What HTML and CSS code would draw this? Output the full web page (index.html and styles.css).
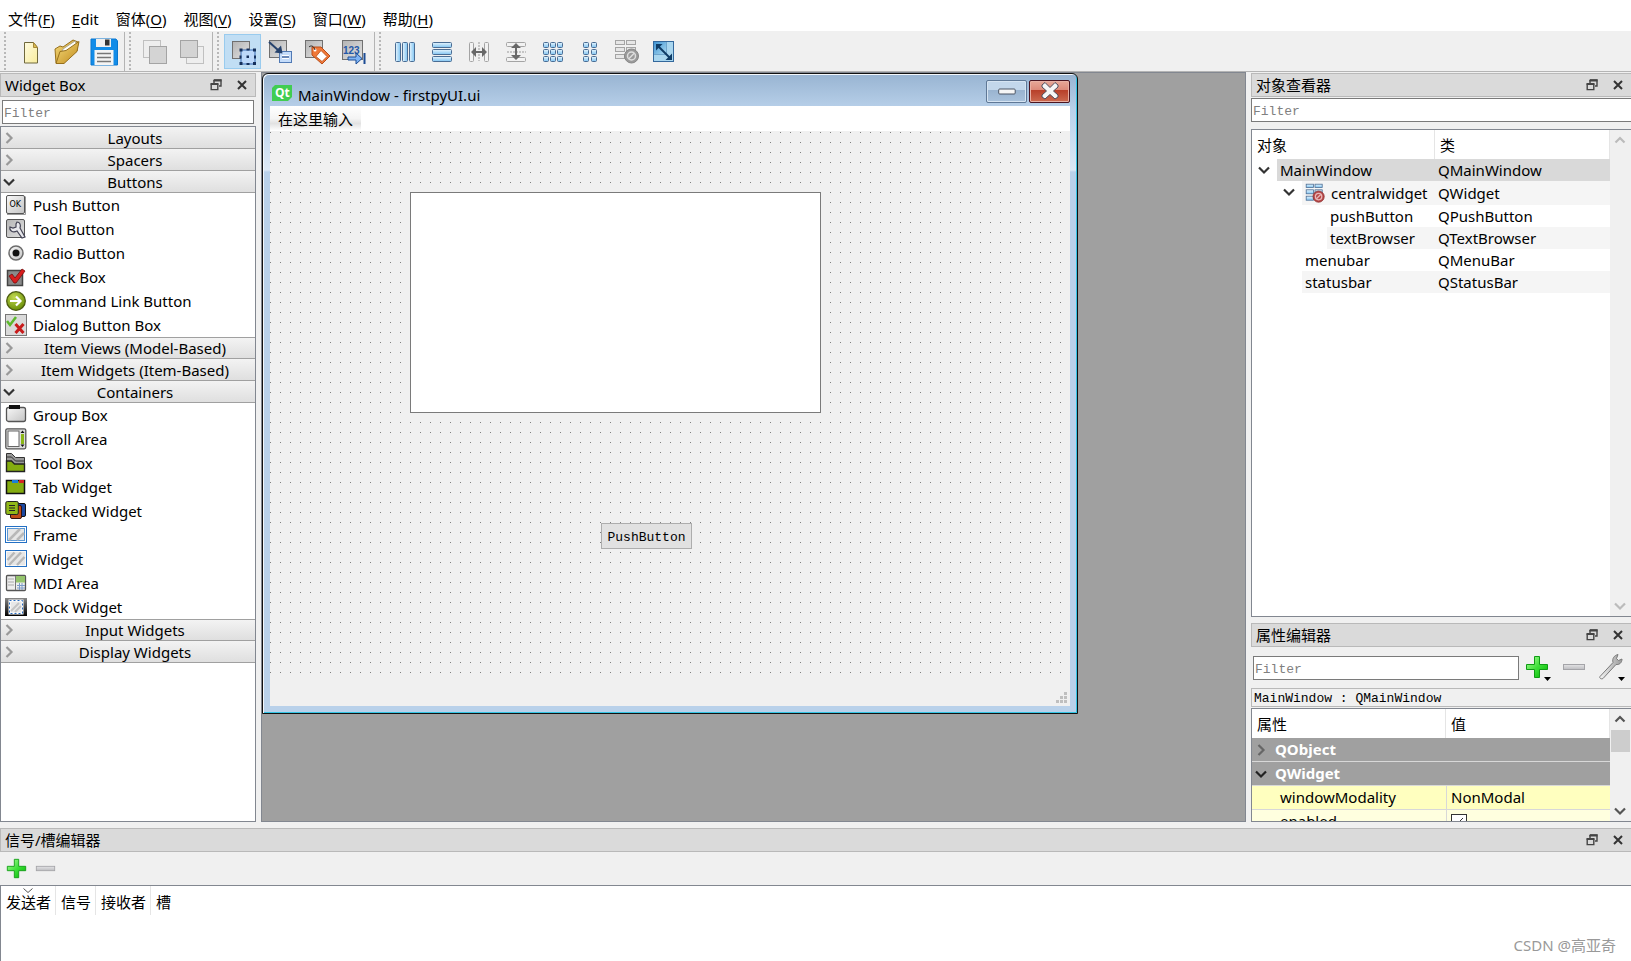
FILE: index.html
```html
<!DOCTYPE html>
<html lang="zh-CN">
<head>
<meta charset="utf-8">
<title>Qt Designer</title>
<link rel="stylesheet" href="styles.css">
</head>
<body>
<svg class="defs" aria-hidden="true">
  <defs>
    <linearGradient id="gGray" x1="0" y1="0" x2="1" y2="1"><stop offset="0" stop-color="#b4b4b4"/><stop offset="1" stop-color="#e2e2e2"/></linearGradient>
    <linearGradient id="gBlue" x1="0" y1="0" x2="0" y2="1"><stop offset="0" stop-color="#e8f5fd"/><stop offset="1" stop-color="#7fc4f2"/></linearGradient>
    <linearGradient id="gBlueH" x1="0" y1="0" x2="1" y2="0"><stop offset="0" stop-color="#e8f5fd"/><stop offset="1" stop-color="#7fc4f2"/></linearGradient>
    <linearGradient id="gPage" x1="0" y1="0" x2="1" y2="1"><stop offset="0" stop-color="#fffbe0"/><stop offset="1" stop-color="#f8ec9c"/></linearGradient>
    <linearGradient id="gGold" x1="0" y1="0" x2="1" y2="1"><stop offset="0" stop-color="#f6dc7c"/><stop offset="1" stop-color="#c08a1c"/></linearGradient>
    <linearGradient id="gPlus" x1="0" y1="0" x2="1" y2="1"><stop offset="0" stop-color="#b4ffa0"/><stop offset=".5" stop-color="#3fe03a"/><stop offset="1" stop-color="#00b400"/></linearGradient>
    <linearGradient id="gMinus" x1="0" y1="0" x2="0" y2="1"><stop offset="0" stop-color="#e4e4e6"/><stop offset="1" stop-color="#bcbcc0"/></linearGradient>
    <linearGradient id="gBox" x1="0" y1="0" x2="1" y2="1"><stop offset="0" stop-color="#f8f8f8"/><stop offset="1" stop-color="#c4c4c4"/></linearGradient>
    <radialGradient id="gGreen" cx=".4" cy=".3" r=".7"><stop offset="0" stop-color="#c0d850"/><stop offset="1" stop-color="#6c9008"/></radialGradient>
    <linearGradient id="gSize" x1="0" y1="0" x2="1" y2="1"><stop offset="0" stop-color="#3f93d2"/><stop offset="1" stop-color="#a8d8f0"/></linearGradient>
    <linearGradient id="gDark" x1="0" y1="0" x2="0" y2="1"><stop offset="0" stop-color="#888"/><stop offset="1" stop-color="#000"/></linearGradient>
    <linearGradient id="gMetal" x1="0" y1="0" x2="1" y2="0"><stop offset="0" stop-color="#f4f4f4"/><stop offset="1" stop-color="#9a9a9a"/></linearGradient>
  </defs>
  <symbol id="float" viewBox="0 0 12 12"><path d="M4 1h7v6h-2M4 1v3" fill="none" stroke="#444" stroke-width="1.4"/><path d="M3.500 1.500h8" stroke="#444" stroke-width="2"/><path d="M1.200 5.200h6.600v5.400h-6.600z" fill="none" stroke="#444" stroke-width="1.400"/><path d="M.6 5h7.800" stroke="#444" stroke-width="2"/></symbol>
  <symbol id="close" viewBox="0 0 12 12"><path d="M2 2l8 8M10 2l-8 8" stroke="#333" stroke-width="2" fill="none"/></symbol>
  <symbol id="right" viewBox="0 0 12 12"><path d="M3.500 1l5 5-5 5" stroke="currentColor" stroke-width="2.200" fill="none"/></symbol>
  <symbol id="down" viewBox="0 0 12 12"><path d="M1 3.500l5 5 5-5" stroke="currentColor" stroke-width="2.200" fill="none"/></symbol>
  <symbol id="up" viewBox="0 0 12 12"><path d="M1.500 8.500l4.500-4.500 4.500 4.500" stroke="currentColor" stroke-width="2.200" fill="none"/></symbol>
  <symbol id="plus" viewBox="0 0 24 24"><path d="M9.500 1.500h5v8h8v5h-8v8h-5v-8h-8v-5h8z" fill="url(#gPlus)" stroke="#0f9c14"/></symbol>
  <symbol id="minus" viewBox="0 0 24 24"><rect x="1.500" y="9.500" width="21" height="5" fill="url(#gMinus)" stroke="#a4a4a8"/></symbol>
  <symbol id="nolayout" viewBox="2 2 25 25"><g fill="url(#gBlue)" stroke="#4a6d94"><rect x="3.500" y="3.500" width="9" height="4"/><rect x="14.500" y="3.500" width="9" height="4"/><rect x="3.500" y="10.500" width="9" height="5"/><rect x="3.500" y="18.500" width="9" height="5"/><rect x="14.500" y="10.500" width="9" height="5"/></g><circle cx="19" cy="19" r="7" fill="#b84848" stroke="#8c2c2c"/><circle cx="19" cy="19" r="4" fill="none" stroke="#e8b8b8" stroke-width="1.600"/><path d="M16.300 21.700l5.400-5.400" stroke="#e8b8b8" stroke-width="1.600"/></symbol>
</svg>

<nav class="menubar">
  <button>文件(<u>F</u>)</button><button><u>E</u>dit</button><button>窗体(<u>O</u>)</button><button>视图(<u>V</u>)</button><button>设置(<u>S</u>)</button><button>窗口(<u>W</u>)</button><button>帮助(<u>H</u>)</button>
</nav>

<div class="toolbar">
  <div class="group">
    <button aria-label="New"><svg viewBox="0 0 28 28"><path d="M8.500 4.500h9l4 5v15.500h-13z" fill="url(#gPage)" stroke="#6f683c"/><path d="M17.500 4.500v5h4z" fill="#dcc050" stroke="#a8893a"/></svg></button>
    <button aria-label="Open"><svg viewBox="0 0 28 28"><path d="M3 25l-1-14 5-3 3 1 10-7 5 2-1 9z" fill="url(#gGold)" stroke="#97701c"/><path d="M6 20l4-9 12-8 2 4-9 10z" fill="#fffefa" stroke="#aaa690"/><path d="M3 25.500l4-12 6-1 13-9-2 10-13 12z" fill="url(#gGold)" stroke="#97701c"/></svg></button>
    <button aria-label="Save"><svg viewBox="0 0 28 28"><path d="M1 1h25l1.500 2v24h-26.500z" fill="#128ce8" stroke="#0877d0"/><rect x="6" y="1" width="15" height="8" fill="#efefef"/><rect x="15" y="1.500" width="4.500" height="6" fill="#333"/><rect x="4.500" y="12" width="19" height="15" fill="#f4f4f4"/><path d="M7 15.500h14M7 19.500h14M7 23.500h14" stroke="#777" stroke-width="1.500"/></svg></button>
  </div>
  <div class="group">
    <button aria-label="Send to Back"><svg viewBox="0 0 28 28"><rect x="2.500" y="2.500" width="17" height="17" fill="#eee" stroke="#c0c0c0"/><rect x="8.500" y="8.500" width="17" height="17" fill="#d4d4d4" stroke="#a4a4a4"/></svg></button>
    <button aria-label="Bring to Front"><svg viewBox="0 0 28 28"><rect x="8.500" y="8.500" width="17" height="17" fill="#eee" stroke="#c0c0c0"/><rect x="2.500" y="2.500" width="17" height="17" fill="#d4d4d4" stroke="#a4a4a4"/></svg></button>
  </div>
  <div class="group">
    <button class="on" aria-label="Edit Widgets"><svg viewBox="0 0 28 28"><rect x="3.500" y="3.500" width="17" height="17" fill="url(#gGray)" stroke="#707070"/><rect x="12" y="12" width="14" height="14" fill="#bcd8fa" stroke="#3b6cb4"/><g fill="#16305c"><rect x="10.500" y="10.500" width="3" height="3"/><rect x="24" y="10.500" width="3" height="3"/><rect x="10.500" y="24" width="3" height="3"/><rect x="24" y="24" width="3" height="3"/><rect x="17.500" y="10.500" width="3" height="2"/><rect x="10.500" y="17.500" width="2" height="3"/><rect x="25" y="17.500" width="2" height="3"/><rect x="17.500" y="25" width="3" height="2"/><rect x="17.500" y="17.500" width="2.500" height="2.500"/></g></svg></button>
    <button aria-label="Edit Signals/Slots"><svg viewBox="0 0 28 28"><rect x="3.500" y="2.500" width="17" height="17" fill="url(#gGray)" stroke="#707070"/><rect x="13.500" y="13.500" width="12" height="11" fill="#c4dcfa" stroke="#5079b4"/><path d="M16 19h7" stroke="#fff" stroke-width="4"/><path d="M16 19h7" stroke="#3760a0" stroke-width="1.500"/><path d="M3 4l9 8" stroke="#26426c" stroke-width="2"/><path d="M16.500 15.500l-8-1 6.500-7z" fill="#26426c"/></svg></button>
    <button aria-label="Edit Buddies"><svg viewBox="0 0 28 28"><rect x="2.500" y="2.500" width="17" height="17" fill="url(#gGray)" stroke="#707070"/><path d="M9 9l9 0 9 9-8 8-10-9z" fill="#f07838" stroke="#b84c18"/><path d="M18 12.500l6 6-5 5-6-5z" fill="#fff" stroke="#b84c18" stroke-width=".8"/><circle cx="12" cy="12" r="1.500" fill="#fff"/><path d="M12 12c-1-4-4-5-6-3" stroke="#222" fill="none"/></svg></button>
    <button aria-label="Edit Tab Order"><svg viewBox="0 0 28 28"><rect x="2.500" y="2.500" width="20" height="19" fill="url(#gGray)" stroke="#707070"/><text x="3" y="16" class="digits">123</text><path d="M8 19h8v-4l6 5.500-6 5.500v-4h-8z" fill="#7eb4f4" stroke="#1d4c94"/><path d="M24.500 15v11" stroke="#1d4c94" stroke-width="2"/></svg></button>
  </div>
  <div class="group">
    <button aria-label="Lay Out Horizontally"><svg viewBox="0 0 28 28"><g fill="url(#gBlueH)" stroke="#4a6d94"><rect x="4.500" y="4.500" width="5" height="19" rx="1"/><rect x="11.500" y="4.500" width="5" height="19" rx="1"/><rect x="18.500" y="4.500" width="5" height="19" rx="1"/></g></svg></button>
    <button aria-label="Lay Out Vertically"><svg viewBox="0 0 28 28"><g fill="url(#gBlue)" stroke="#4a6d94"><rect x="4.500" y="4.500" width="19" height="5" rx="1"/><rect x="4.500" y="11.500" width="19" height="5" rx="1"/><rect x="4.500" y="18.500" width="19" height="5" rx="1"/></g></svg></button>
    <button aria-label="Horizontal Splitter"><svg viewBox="0 0 28 28"><g fill="#f2f2f2" stroke="#a4a4a4"><rect x="4.500" y="4.500" width="4" height="19" rx="1"/><rect x="19.500" y="4.500" width="4" height="19" rx="1"/></g><path d="M14 4v19" stroke="#999" stroke-dasharray="2 1"/><path d="M6 14l5-5v4h6v-4l5 5-5 5v-4h-6v4z" fill="#686868"/></svg></button>
    <button aria-label="Vertical Splitter"><svg viewBox="0 0 28 28"><g fill="#f2f2f2" stroke="#a4a4a4"><rect x="4.500" y="4.500" width="19" height="4" rx="1"/><rect x="4.500" y="19.500" width="19" height="4" rx="1"/></g><path d="M5 14h19" stroke="#999" stroke-dasharray="2 1"/><path d="M14 5l5 5h-4v7h4l-5 5-5-5h4v-7h-4z" fill="#686868"/></svg></button>
    <button aria-label="Lay Out in a Grid"><svg viewBox="0 0 28 28"><g fill="url(#gBlue)" stroke="#4a6d94"><rect x="4.500" y="4.500" width="5" height="5" rx="1"/><rect x="11.500" y="4.500" width="5" height="5" rx="1"/><rect x="18.500" y="4.500" width="5" height="5" rx="1"/><rect x="4.500" y="11.500" width="5" height="5" rx="1"/><rect x="11.500" y="11.500" width="5" height="5" rx="1"/><rect x="18.500" y="11.500" width="5" height="5" rx="1"/><rect x="4.500" y="18.500" width="5" height="5" rx="1"/><rect x="11.500" y="18.500" width="5" height="5" rx="1"/><rect x="18.500" y="18.500" width="5" height="5" rx="1"/></g></svg></button>
    <button aria-label="Lay Out in a Form"><svg viewBox="0 0 28 28"><g fill="url(#gBlue)" stroke="#4a6d94"><rect x="7.500" y="4.500" width="5" height="5" rx="1"/><rect x="15.500" y="4.500" width="5" height="5" rx="1"/><rect x="7.500" y="11.500" width="5" height="5" rx="1"/><rect x="15.500" y="11.500" width="5" height="5" rx="1"/><rect x="7.500" y="18.500" width="5" height="5" rx="1"/><rect x="15.500" y="18.500" width="5" height="5" rx="1"/></g></svg></button>
    <button aria-label="Break Layout"><svg viewBox="0 0 28 28"><g fill="#e6e6e6" stroke="#a4a4a4"><rect x="2.500" y="2.500" width="9" height="4"/><rect x="13.500" y="2.500" width="9" height="4"/><rect x="2.500" y="9.500" width="9" height="4"/><rect x="2.500" y="16.500" width="9" height="4"/><rect x="13.500" y="9.500" width="9" height="4"/></g><circle cx="18.500" cy="18" r="7" fill="#9a9a9a" stroke="#888"/><circle cx="18.500" cy="18" r="4" fill="none" stroke="#ddd" stroke-width="1.500"/><path d="M15.800 20.700l5.400-5.400" stroke="#ddd" stroke-width="1.500"/></svg></button>
    <button aria-label="Adjust Size"><svg viewBox="0 0 28 28"><rect x="3.500" y="3.500" width="20" height="20" fill="#a9d6ef" stroke="#34689c"/><rect x="4" y="4" width="12" height="12" fill="url(#gSize)"/><path d="M16.500 4v12.500h-12.500" fill="none" stroke="#6fa5cc"/><path d="M8 8l12 12" stroke="#0f3c66" stroke-width="2"/><path d="M6 6h6.500l-6.500 6.500zM22 22h-6.500l6.500-6.500z" fill="#0f3c66"/></svg></button>
  </div>
</div>

<main class="work">
  <section class="dock widgetbox">
    <header class="title"><h2>Widget Box</h2><button aria-label="Float"><svg><use href="#float"/></svg></button><button aria-label="Close"><svg><use href="#close"/></svg></button></header>
    <input class="filter" type="text" placeholder="Filter" aria-label="Filter widgets">
    <div class="boxlist">
      <button class="cat"><svg><use href="#right"/></svg><span>Layouts</span></button>
      <button class="cat"><svg><use href="#right"/></svg><span>Spacers</span></button>
      <button class="cat open"><svg><use href="#down"/></svg><span>Buttons</span></button>
      <ul>
        <li><svg viewBox="0 0 22 22"><rect x="1.500" y="1.500" width="18" height="18" rx="1.500" fill="url(#gBox)" stroke="#555"/><path d="M2 20.500h18.500v-18" fill="none" stroke="#999"/><text x="4.500" y="12.500" class="oktext">OK</text></svg>Push Button</li>
        <li><svg viewBox="0 0 22 22"><rect x="1.500" y="1.500" width="18" height="18" rx="1.500" fill="url(#gGray)" stroke="#555"/><path d="M12 4c3 0 4 3 3 6l5 9-3 1-5-7c-4 2-8 0-7-4l3 1 3-1v-3z" fill="#e8e8ec" stroke="#445" stroke-width="1.200"/></svg>Tool Button</li>
        <li><svg viewBox="0 0 22 22"><circle cx="11" cy="11" r="7" fill="url(#gBox)" stroke="#6c6c6c" stroke-width="1.500"/><circle cx="11" cy="11" r="3.500" fill="#111"/></svg>Radio Button</li>
        <li><svg viewBox="0 0 22 22"><rect x="2.500" y="4.500" width="15" height="15" fill="#8a8a8a" stroke="#444" stroke-width="1.500"/><path d="M4 10l3-2 3 4 7-9 3 2-9 12h-2z" fill="#d81e1e" stroke="#7c0c0c" stroke-width=".8"/></svg>Check Box</li>
        <li><svg viewBox="0 0 22 22"><circle cx="11" cy="11" r="9.300" fill="url(#gGreen)" stroke="#4c5c10" stroke-width="1.300"/><path d="M5 11h10M11 6.500l4.500 4.500-4.500 4.500" fill="none" stroke="#fff" stroke-width="2.200"/></svg>Command Link Button</li>
        <li><svg viewBox="0 0 22 22"><rect x=".5" y=".5" width="21" height="21" fill="#dadada" stroke="#777"/><path d="M2 7l3 4 6-8" fill="none" stroke="#5cb82c" stroke-width="2.500"/><path d="M10.500 10l8 9M18.500 10l-8 9" stroke="#c81c1c" stroke-width="3"/></svg>Dialog Button Box</li>
      </ul>
      <button class="cat"><svg><use href="#right"/></svg><span>Item Views (Model-Based)</span></button>
      <button class="cat"><svg><use href="#right"/></svg><span>Item Widgets (Item-Based)</span></button>
      <button class="cat open"><svg><use href="#down"/></svg><span>Containers</span></button>
      <ul>
        <li><svg viewBox="0 0 22 22"><rect x="1.500" y="3.500" width="19" height="14" rx="2" fill="url(#gBox)" stroke="#555" stroke-width="1.300"/><rect x="4" y="1" width="11" height="4" fill="#111"/></svg>Group Box</li>
        <li><svg viewBox="0 0 22 22"><rect x=".8" y=".8" width="20" height="20" rx="1.500" fill="#ddd" stroke="#555" stroke-width="1.300"/><rect x="3" y="3" width="11" height="15.500" fill="#fff" stroke="#666"/><rect x="16" y="6" width="3" height="10" fill="#8cb818"/><path d="M15.500 5l2-2.500 2 2.500zM15.500 16.500l2 2.500 2-2.500z" fill="#111"/></svg>Scroll Area</li>
        <li><svg viewBox="0 0 22 22"><path d="M1.500 1.500h5l4 4h9v14h-18z" fill="#999" stroke="#333"/><path d="M1.500 5h5l4 4h9" fill="none" stroke="#333"/><path d="M1.500 9h5l3 3h10v7.500h-18z" fill="#84ac10" stroke="#222" stroke-width="1.400"/></svg>Tool Box</li>
        <li><svg viewBox="0 0 22 22"><rect x="1.500" y="4.500" width="18" height="13" fill="#84ac10" stroke="#111" stroke-width="1.500"/><rect x="7" y="4" width="6" height="3" fill="#1c80d8"/><rect x="14" y="4" width="5" height="3" fill="#d42424"/></svg>Tab Widget</li>
        <li><svg viewBox="0 0 22 22"><rect x="10.500" y="3.500" width="10" height="13" rx="1.500" fill="#1c48a0" stroke="#111"/><rect x="5.500" y="5.500" width="11" height="13" rx="1.500" fill="#c04c18" stroke="#311"/><rect x=".8" y="1.500" width="12.500" height="13" rx="1.500" fill="#90b818" stroke="#222"/><path d="M4 5.500h6M4 8h6M4 10.500h6" stroke="#222"/></svg>Stacked Widget</li>
        <li><svg viewBox="0 0 22 22"><rect x=".5" y="2.500" width="21" height="16" fill="#fff" stroke="#2470c4"/><rect x="2.500" y="4.500" width="17" height="12" fill="#e6e6e6" stroke="#5c98d4"/><path d="M4 16l11-11M12 16l7-7" stroke="#b8b8b8" stroke-width="2.500"/></svg>Frame</li>
        <li><svg viewBox="0 0 22 22"><rect x=".5" y="2.500" width="21" height="16" fill="#f8f8f8" stroke="#2470c4"/><rect x="2" y="4" width="18" height="13" fill="#e6e6e6"/><path d="M2.500 12l7-7.500M4 17l12-12.500M12 17l7.500-8" stroke="#b8b8b8" stroke-width="2.500"/></svg>Widget</li>
        <li><svg viewBox="0 0 22 22"><rect x="1.500" y="3.500" width="19" height="15" rx="1" fill="#eee" stroke="#555" stroke-width="1.300"/><rect x="11" y="4" width="9" height="6.500" fill="#94c46c"/><path d="M3 7h6M3 10h6M3 13h6" stroke="#aaa"/><path d="M10.500 4v14" stroke="#777"/><path d="M12 13.500h8M12 16h8M14.500 11v7M17 11v7" stroke="#7c9cc8"/></svg>MDI Area</li>
        <li><svg viewBox="0 0 22 22"><rect y="2" width="22" height="18" fill="url(#gDark)"/><rect x="4.500" y="4.500" width="13" height="13" fill="#e8e8e8" stroke="#fff" stroke-width="2"/><rect x="4.500" y="4.500" width="13" height="13" fill="none" stroke="#2468bc" stroke-dasharray="2 2"/><path d="M6 15l8-8M10 16l6-6" stroke="#c4c4c4" stroke-width="2"/></svg>Dock Widget</li>
      </ul>
      <button class="cat"><svg><use href="#right"/></svg><span>Input Widgets</span></button>
      <button class="cat"><svg><use href="#right"/></svg><span>Display Widgets</span></button>
    </div>
  </section>

  <section class="desktop">
    <article class="window">
      <header class="caption">
        <svg class="qt" viewBox="0 0 20 16"><path d="M3 0h17v12l-4 4h-16v-13z" fill="#41cd52"/><text x="3" y="12" class="qttext">Qt</text></svg>
        <h1>MainWindow - firstpyUI.ui</h1>
        <button class="min" aria-label="Minimize"><svg viewBox="0 0 18 18"><rect x=".7" y="7" width="16.500" height="5" rx="1" fill="#f6f6f6" stroke="#4a5464"/></svg></button>
        <button class="shut" aria-label="Close"><svg viewBox="0 0 18 18"><path d="M1 3l3-2.500 5 5 5-5 3 2.500v2l-4.500 4 4.500 4v2l-3 2-5-4.500-5 4.500-3-2v-2l4.500-4-4.500-4z" fill="#f6f6f6" stroke="#4c4c5c"/></svg></button>
      </header>
      <div class="formmenu"><button>在这里输入</button></div>
      <div class="form">
        <div class="browser"></div>
        <button class="push">PushButton</button>
      </div>
      <footer class="status"><svg viewBox="0 0 11 11"><path d="M8 0h3v3h-3zM4 4h3v3h-3zM8 4h3v3h-3zM0 8h3v3h-3zM4 8h3v3h-3zM8 8h3v3h-3z" fill="#bfbfbf"/></svg></footer>
    </article>
  </section>

  <div class="side">
    <section class="dock inspector">
      <header class="title"><h2>对象查看器</h2><button aria-label="Float"><svg><use href="#float"/></svg></button><button aria-label="Close"><svg><use href="#close"/></svg></button></header>
      <input class="filter" type="text" placeholder="Filter" aria-label="Filter objects">
      <div class="view">
        <table class="tree">
          <colgroup><col class="c-object"><col></colgroup>
          <thead><tr><th>对象</th><th>类</th></tr></thead>
          <tbody>
            <tr class="sel"><td class="l0"><svg class="arrow"><use href="#down"/></svg><span>MainWindow</span></td><td>QMainWindow</td></tr>
            <tr class="alt tall"><td class="l1"><svg class="arrow"><use href="#down"/></svg><span><svg class="ico"><use href="#nolayout"/></svg>centralwidget</span></td><td>QWidget</td></tr>
            <tr><td class="l2"><span>pushButton</span></td><td>QPushButton</td></tr>
            <tr class="alt"><td class="l2"><span>textBrowser</span></td><td>QTextBrowser</td></tr>
            <tr><td class="l1"><span>menubar</span></td><td>QMenuBar</td></tr>
            <tr class="alt"><td class="l1"><span>statusbar</span></td><td>QStatusBar</td></tr>
          </tbody>
        </table>
        <div class="scroll off"><svg><use href="#up"/></svg><svg><use href="#down"/></svg></div>
      </div>
    </section>
    <section class="dock props">
      <header class="title"><h2>属性编辑器</h2><button aria-label="Float"><svg><use href="#float"/></svg></button><button aria-label="Close"><svg><use href="#close"/></svg></button></header>
      <div class="proptools">
        <input class="filter" type="text" placeholder="Filter" aria-label="Filter properties">
        <button aria-label="Add property"><svg viewBox="0 0 28 28"><use href="#plus" x="1" y="1" width="24" height="24"/><path d="M20 23h7l-3.500 4z"/></svg></button>
        <button aria-label="Remove property"><svg viewBox="0 0 28 28"><use href="#minus" x="1" y="1" width="24" height="24"/></svg></button>
        <button aria-label="Configure"><svg viewBox="0 0 28 28"><path d="M2 22.500l13-14c-1-4 1-7 5-8l-1.500 4 2 2 3.500-1.500c0 4-3 6-6 5.500l-13 14c-2 1-4-.5-3-2z" fill="url(#gMetal)" stroke="#7a7a7a"/><path d="M20 23h7l-3.500 4z"/></svg></button>
      </div>
      <div class="objname">MainWindow : QMainWindow</div>
      <div class="view">
        <table class="proptable">
          <colgroup><col class="c-prop"><col></colgroup>
          <thead><tr><th>属性</th><th>值</th></tr></thead>
          <tbody>
            <tr class="group-row"><td colspan="2"><svg class="dim"><use href="#right"/></svg>QObject</td></tr>
            <tr class="group-row"><td colspan="2"><svg><use href="#down"/></svg>QWidget</td></tr>
            <tr class="y1"><td>windowModality</td><td>NonModal</td></tr>
            <tr class="y2"><td><label for="enabled">enabled</label></td><td><input id="enabled" type="checkbox" checked></td></tr>
          </tbody>
        </table>
        <div class="scroll"><svg><use href="#up"/></svg><i></i><svg><use href="#down"/></svg></div>
      </div>
    </section>
  </div>
</main>

<section class="signals">
  <header class="title"><h2>信号/槽编辑器</h2><button aria-label="Float"><svg><use href="#float"/></svg></button><button aria-label="Close"><svg><use href="#close"/></svg></button></header>
  <div class="sigtools"><button aria-label="Add"><svg><use href="#plus"/></svg></button><button aria-label="Delete"><svg><use href="#minus"/></svg></button></div>
  <div class="sigview">
    <table><thead><tr><th class="sorted">发送者<svg viewBox="0 0 10 5"><path d="M.5.500l4.500 4 4.500-4" fill="none" stroke="#555"/></svg></th><th>信号</th><th>接收者</th><th>槽</th></tr></thead></table>
    <p class="mark">CSDN @高亚奇</p>
  </div>
</section>
</body>
</html>
```

FILE: styles.css
```css
* { box-sizing: border-box; }
html, body { height: 100%; margin: 0; }
body {
  display: flex;
  flex-direction: column;
  overflow: hidden;
  background: #f0f0f0;
  color: #000;
  font: 15px/22px "Noto Sans", "Noto Sans CJK SC", sans-serif;
}
button {
  margin: 0;
  padding: 0;
  border: 0;
  background: none;
  color: inherit;
  font: inherit;
}
h1, h2, ul, p { margin: 0; padding: 0; font: inherit; }
table { border-collapse: separate; border-spacing: 0; table-layout: fixed; }
th { font-weight: normal; text-align: left; }
th, td { padding: 0; }
.defs { position: absolute; width: 0; height: 0; }

/* Menu bar and tool bars */
.menubar {
  display: flex;
  flex: none;
  gap: 1px;
  height: 32px;
  padding-top: 8px;
  background: #fff;
  border-bottom: 1px solid #f0f0f0;
}
.menubar button { padding: 0 8px; line-height: 23px; }
.menubar u { text-underline-offset: 2px; }
.toolbar {
  display: flex;
  flex: none;
  height: 40px;
  border-bottom: 1px solid #b4b4b4;
}
.group {
  display: flex;
  align-items: center;
  padding: 0 2px 0 11px;
  border-right: 1px solid #b4b4b4;
  background: radial-gradient(circle at 1px 1px, #b8b8b8 1px, transparent 1px) 4px 4px / 2px 4px repeat-y;
}
.group:last-child { border-right: 0; }
.group button {
  display: grid;
  place-items: center;
  width: 37px;
  height: 35px;
}
.group .on { background: #c1def4; border: 1px solid #99cbee; }
.group svg { width: 28px; height: 28px; }
.digits { font: bold 10px "Liberation Sans", sans-serif; fill: #2458a8; }

/* Dock panels */
.work { display: flex; flex: 1; min-height: 0; gap: 5px; }
.dock { display: flex; flex-direction: column; }
.title {
  display: flex;
  flex: none;
  align-items: center;
  height: 24px;
  padding: 0 6px 0 4px;
  background: #dadada;
  border: 1px solid #b9b9b9;
}
.title h2 { flex: 1; }
.title button { display: grid; place-items: center; width: 14px; height: 20px; margin-left: 12px; }
.title svg { width: 12px; height: 12px; }
.filter {
  height: 24px;
  min-width: 0;
  padding: 4px 2px 2px 1px;
  border: 1px solid #7a7a7a;
  border-radius: 0;
  background: #fff;
  font: 13px "Liberation Mono", monospace;
}
.filter::placeholder { color: #808080; opacity: 1; }

.widgetbox { width: 256px; padding-top: 1px; flex: none; }
.widgetbox .filter { margin: 3px 2px 2px; }
.boxlist {
  flex: 1;
  overflow: hidden;
  background: #fff;
  border: 1px solid #828790;
}
.cat {
  display: flex;
  align-items: center;
  width: 100%;
  height: 22px;
  padding-left: 2px;
  background: linear-gradient(#f3f3f3, #dfdfdf);
  border-bottom: 1px solid #a0a0a0;
  color: #999;
}
ul + .cat { border-top: 1px solid #a0a0a0; }
.cat.open { color: #333; }
.cat svg { width: 12px; height: 12px; }
.cat span { flex: 1; color: #000; text-align: center; }
.boxlist ul { list-style: none; }
.boxlist li { display: flex; align-items: center; gap: 6px; height: 24px; padding-left: 4px; line-height: 24px; }
.boxlist li svg { width: 22px; height: 22px; flex: none; }
.oktext { font: 8px "DejaVu Sans", sans-serif; }

/* Form canvas */
.desktop {
  flex: 1;
  min-width: 0;
  overflow: hidden;
  background: #a0a0a0;
  border: 1px solid #828790;
}
.window {
  width: 816px;
  padding: 2px 7px 7px;
  background: linear-gradient(#98b4d2, #b9d1ea 36px, #dce8f5 96px, #b9d1ea 98px);
  border: 1px solid #111;
  border-radius: 6px 6px 0 0;
  box-shadow: inset 1px 1px #f4f8fc, inset -1px -1px #33c4e4;
}
.caption { display: flex; align-items: center; height: 30px; padding: 3px 0 0 2px; }
.caption h1 { flex: 1; padding: 5px 0 0 6px; }
.qt { width: 20px; height: 16px; }
.qttext { font: bold 12px "Open Sans", sans-serif; fill: #fff; }
.min, .shut {
  display: grid;
  place-items: center;
  width: 41px;
  height: 23px;
  margin: 0 0 3px 2px;
  border: 1px solid #5f7896;
  border-radius: 2px;
  background: linear-gradient(#c3d7eb 45%, #9ab4d0 45%, #a9c2dc);
  box-shadow: inset 0 0 0 1px #d6e4f2;
}
.shut { border-color: #4a1420; background: linear-gradient(#e8a898, #dc8878 45%, #b8402a 45%, #cc6a50); box-shadow: inset 0 0 0 1px #e8b0a4; }
.min svg, .shut svg { width: 18px; height: 18px; }
.formmenu { display: flex; height: 25px; background: #fff; }
.formmenu button { padding: 0 8px; background: linear-gradient(#fff, #f4f4f4 50%, #e2e2e2 70%, #fff); }
.form {
  position: relative;
  height: 551px;
  background: #f0f0f0 conic-gradient(from 270deg at 1px 1px, #808080 90deg, transparent 0) 0 1px / 10px 10px;
}
.browser { position: absolute; left: 140px; top: 61px; width: 411px; height: 221px; background: #fff; border: 1px solid #7a7a7a; }
.push {
  position: absolute;
  left: 331px;
  top: 392px;
  width: 91px;
  height: 26px;
  padding-top: 3px;
  background: #e1e1e1;
  border: 1px solid #adadad;
  font: 13px "Liberation Mono", monospace;
}
.status { display: flex; justify-content: flex-end; align-items: flex-end; height: 24px; padding: 3px; background: #f0f0f0; }
.status svg { width: 11px; height: 11px; }

/* Right-hand docks */
.side { display: flex; flex-direction: column; flex: none; width: 380px; gap: 6px; }
.inspector { flex: 1; min-height: 0; padding-top: 1px; }
.side .title { border-right: 0; }
.inspector .filter { margin: 1px 0 7px; border-right: 0; }
.view { display: flex; flex: 1; min-height: 0; overflow: hidden; background: #fff; border: 1px solid #828790; border-right: 0; }
.view table { flex: 1; align-self: flex-start; }
.view thead th { height: 29px; padding-left: 5px; border-right: 1px solid #e5e5e5; }
.c-object { width: 183px; }
.tree tbody tr { height: 22px; }
.tree tbody .tall { height: 24px; }
.tree td { line-height: 22px; white-space: nowrap; }
.tree td:first-child { display: flex; height: 100%; overflow: hidden; }
.tree td:last-child { padding-left: 3px; }
.tree td span { display: flex; flex: 1; align-items: center; padding-left: 3px; height: 22px; }
.tree .tall span { height: 24px; }
.tree .sel span, .tree .sel td:last-child { background: #d9d9d9; }
.tree .alt span, .tree .alt td:last-child { background: #f5f5f5; }
.arrow { width: 12px; height: 12px; color: #333; margin: 5px 7px 0 6px; flex: none; }
.l1 { padding-left: 50px; }
.l1:has(.arrow) { padding-left: 25px; }
.l2 { padding-left: 75px; }
.ico { width: 20px; height: 20px; margin-right: 6px; flex: none; }
.scroll { display: flex; flex-direction: column; flex: none; width: 21px; padding: 4px 1px 4px 0; background: #f0f0f0; align-items: center; color: #555; }
.scroll.off { color: #bbb; }
.scroll svg { width: 12px; height: 12px; }
.scroll svg:last-child { margin-top: auto; }
.scroll i { width: 19px; height: 22px; margin-top: 5px; background: #cdcdcd; }

.props { flex: none; height: 199px; }
.proptools { display: flex; flex: none; gap: 9px; padding: 7px 5px 6px 2px; align-items: center; }
.proptools .filter { flex: 1; margin-right: -4px; }
.proptools button, .proptools svg { display: block; width: 28px; height: 28px; }
.objname { height: 19px; flex: none; margin-bottom: 1px; padding-left: 2px; border: 1px solid #b9b9b9; border-right: 0; font: 13px/19px "Liberation Mono", monospace; }
.c-prop { width: 194px; }
.proptable tbody td { height: 24px; padding-left: 28px; border-bottom: 1px solid #d8d8d8; line-height: 23px; }
.proptable tbody td + td { padding-left: 4px; border-left: 1px solid #d8d8d8; }
.proptable .group-row td { padding-left: 3px; background: #a0a0a0; color: #fff; font-weight: bold; }
.group-row svg { width: 12px; height: 12px; margin-right: 8px; color: #222; vertical-align: -1px; }
.group-row .dim { color: #666; }
.y1 { background: #ffffbf; }
.y2 { background: #ffffdf; }
.y2 input { display: block; appearance: none; width: 16px; height: 16px; margin: 0; border: 1px solid #333; background: #fff linear-gradient(135deg, transparent 48%, #333 48% 56%, transparent 56%) 3px 3px / 8px 8px no-repeat; }

/* Signal/slot editor */
.signals { display: flex; flex-direction: column; flex: none; height: 133px; margin-top: 6px; }
.signals .title { border-right: 0; }
.sigtools { display: flex; flex: none; gap: 8px; height: 33px; padding: 6px; }
.sigtools button, .sigtools svg { display: block; width: 21px; height: 21px; }
.sigview { display: flex; flex: 1; justify-content: space-between; background: #fff; border: 1px solid #828790; border-width: 1px 0 0 1px; }
.sigview table { align-self: flex-start; }
.sigview th { position: relative; height: 29px; padding: 2px 4px 0 5px; border-right: 1px solid #e5e5e5; white-space: nowrap; }
.sigview th:last-child { border-right: 0; }
.sorted svg { position: absolute; left: 22px; top: 2px; width: 10px; height: 5px; }
.mark { align-self: flex-end; padding: 0 15px 5px 0; color: #999; }
```
